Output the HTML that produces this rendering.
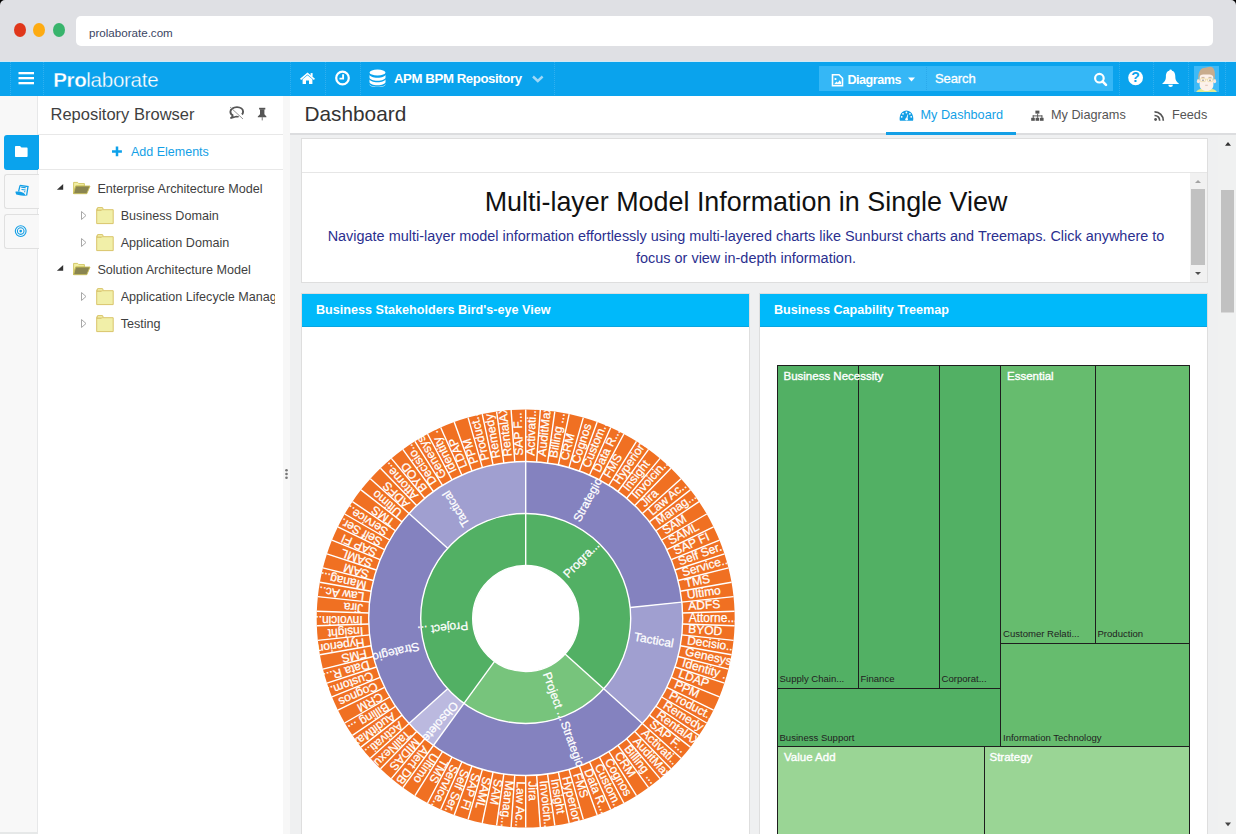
<!DOCTYPE html>
<html><head><meta charset="utf-8">
<style>
*{margin:0;padding:0;box-sizing:border-box}
html,body{width:1236px;height:834px;overflow:hidden;background:#000;font-family:"Liberation Sans",sans-serif}
.a{position:absolute}
#chrome{left:0;top:0;width:1236px;height:62px;background:#dfe0e4;border-radius:5px 5px 0 0}
.dot{width:12px;height:14px;border-radius:50%;top:23px}
#url{left:76px;top:16px;width:1137px;height:30px;background:#fff;border-radius:5px}
#urltxt{left:89px;top:25.5px;font-size:11.6px;color:#3b4563}
#nav{left:0;top:61px;width:1236px;height:35px;background:#0aa3ed;border-top:1px solid #cfe8f6}
.sep{top:62px;width:1px;height:33px;background:#1696d6;opacity:.5}
#page{left:0;top:96px;width:1236px;height:738px;background:#fff}
#rail{left:0;top:96px;width:38px;height:738px;background:#f8f8f8;border-right:1px solid #e7e8e9;border-bottom:2px solid #e6e8e8}
#lpanel{left:38px;top:96px;width:245px;height:738px;background:#fff}
#split{left:283px;top:96px;width:8px;height:738px;background:#f7f7f7;border-right:1px solid #dcdcdc}
#mainhdr{left:290px;top:96px;width:946px;height:37px;background:#fff}
#content{left:290px;top:133px;width:928px;height:701px;background:#eff0f1;border-top:2px solid #dcdddf}
#vscroll{left:1218px;top:133px;width:18px;height:701px;background:#f0f1f1;border-top:2px solid #dcdddf}
.card{background:#fff;border:1px solid #dedede}
.hdr{background:#00b9fa;border-bottom:1px solid #0aa5e0;color:#fff;font-weight:bold;font-size:12.6px;height:33px;line-height:33px;padding-left:14px}
.tree{font-size:12.6px;color:#3f3f3f}
.tab{font-size:12.7px}
.tm{position:absolute;border:1px solid #1c1c1c}
.tml{position:absolute;font-size:10px;color:#222}
.tmh{position:absolute;font-size:12px;font-weight:bold;color:#fff}
</style></head><body>
<div id="chrome" class="a"></div>
<div class="a dot" style="left:14px;background:#e0371b"></div>
<div class="a dot" style="left:33px;background:#fdab12"></div>
<div class="a dot" style="left:53px;background:#38b46c"></div>
<div id="url" class="a"></div>
<div id="urltxt" class="a">prolaborate.com</div>

<div id="nav" class="a"></div>
<div id="page" class="a"></div>
<div id="rail" class="a"></div>
<div id="lpanel" class="a"></div>
<div id="split" class="a"></div>
<div id="mainhdr" class="a"></div>
<div id="content" class="a"></div>
<div id="vscroll" class="a"></div>

<!-- nav content -->
<div class="a" style="left:53.3px;top:67.9px;font-size:20.5px;color:#fff;letter-spacing:-0.25px"><b style="font-weight:bold;letter-spacing:-0.4px;-webkit-text-stroke:0.3px #0aa3ed">Pro</b><span style="-webkit-text-stroke:0.3px #0aa3ed">laborate</span></div>
<svg class="a" style="left:0;top:61px" width="1236" height="35">
<g stroke="#3fb6f2" stroke-width="1" stroke-dasharray="1,1" opacity=".7">
<line x1="10.5" y1="1" x2="10.5" y2="34"/><line x1="43.5" y1="1" x2="43.5" y2="34"/>
<line x1="290.5" y1="1" x2="290.5" y2="34"/><line x1="325.5" y1="1" x2="325.5" y2="34"/><line x1="360.5" y1="1" x2="360.5" y2="34"/><line x1="554.5" y1="1" x2="554.5" y2="34"/>
<line x1="1119.5" y1="1" x2="1119.5" y2="34"/><line x1="1153.5" y1="1" x2="1153.5" y2="34"/><line x1="1188.5" y1="1" x2="1188.5" y2="34"/><line x1="1225.5" y1="1" x2="1225.5" y2="34"/>
</g>
<rect x="819" y="5" width="294" height="25" fill="#35b7f6"/>
<line x1="926.5" y1="6" x2="926.5" y2="30" stroke="#2aa9ec" stroke-dasharray="1,1"/>
<g fill="#fff">
<rect x="18.5" y="11" width="15.5" height="2.3"/><rect x="18.5" y="16" width="15.5" height="2.3"/><rect x="18.5" y="21" width="15.5" height="2.3"/>
</g>
<!-- home -->
<g transform="translate(300,11.5)" fill="#fff">
<path d="M0,6.2 L7.5,0 L15,6.2 L13.9,7.4 L7.5,2.1 L1.1,7.4 Z"/>
<path d="M2.6,6.8 L7.5,2.8 L12.4,6.8 V11.5 H9 V8 H6 V11.5 H2.6 Z"/>
<rect x="10.6" y="0.6" width="2" height="3.6"/>
</g>
<!-- clock -->
<g transform="translate(342.5,17)" fill="none" stroke="#fff">
<circle r="6.3" stroke-width="2.2"/><path d="M0.6,-3.8 V0.6 H-3" stroke-width="1.9"/>
</g>
<!-- database -->
<g transform="translate(369.5,8.5)" fill="#fff">
<ellipse cx="8" cy="3" rx="8" ry="3"/>
<path d="M0,5 C0,6.8 3.6,8.2 8,8.2 C12.4,8.2 16,6.8 16,5 V8 C16,9.8 12.4,11.2 8,11.2 C3.6,11.2 0,9.8 0,8 Z"/>
<path d="M0,9.6 C0,11.4 3.6,12.8 8,12.8 C12.4,12.8 16,11.4 16,9.6 V12.6 C16,14.4 12.4,15.8 8,15.8 C3.6,15.8 0,14.4 0,12.6 Z"/>
<path d="M0,14.2 C0,16 3.6,17.2 8,17.2 C12.4,17.2 16,16 16,14.2 V14.9 C16,16.5 12.4,17.6 8,17.6 C3.6,17.6 0,16.5 0,14.9 Z"/>
</g>
<path d="M533,15.5 L537.8,20 L542.6,15.5" fill="none" stroke="#9fd8f7" stroke-width="2.4"/>
<!-- diagrams file icon -->
<g transform="translate(831.5,12.8)" fill="none" stroke="#fff" stroke-width="1.6">
<path d="M1,1 H7.5 L11,4.5 V12 H1 Z"/>
<circle cx="4" cy="5.2" r="1.1" fill="#fff" stroke="none"/>
<path d="M2.5,10.5 L5,7.8 L6.3,9 L8.2,6.5 L9.6,8.5 V10.5 Z" fill="#fff" stroke="none"/>
</g>
<path d="M908,16.5 H915 L911.5,20.5 Z" fill="#fff"/>
<!-- search -->
<g fill="none" stroke="#fff"><circle cx="1099.4" cy="17.2" r="4.3" stroke-width="2.2"/><path d="M1102.5,20.3 L1106,23.8" stroke-width="2.6" stroke-linecap="round"/></g>
<!-- question -->
<circle cx="1135.6" cy="16.8" r="7.4" fill="#fff"/>
<text x="1135.6" y="21.3" text-anchor="middle" font-family="Liberation Sans" font-weight="bold" font-size="14" fill="#0aa3ed">?</text>
<!-- bell -->
<g transform="translate(1162.5,8.4)" fill="#fff">
<path d="M8.1,1.2 C11.6,1.2 12.8,4 12.8,7 C12.8,11 14.2,12.4 16.2,13.8 V14.6 H0 V13.8 C2,12.4 3.4,11 3.4,7 C3.4,4 4.6,1.2 8.1,1.2 Z"/>
<circle cx="8.1" cy="1.2" r="1.2"/>
<path d="M5.8,15.3 A2.3,2.3 0 0 0 10.4,15.3 Z"/>
</g>
<!-- avatar -->
<g transform="translate(1194,5)">
<rect x="0" y="0" width="25" height="26" fill="#3fbaf7"/>
<ellipse cx="4.4" cy="15.2" rx="1.5" ry="2.1" fill="#fbe6dc"/><ellipse cx="20.6" cy="15.2" rx="1.5" ry="2.1" fill="#fbe6dc"/>
<path d="M2,26 C4,23 8,22 12.5,22 C17,22 21,23 23,26 Z" fill="#e2ea8f"/>
<path d="M5.6,11 C5.6,6 8,5 12.5,5 C17,5 19.4,6 19.4,11 V19 C19.4,22.5 16.5,25 12.5,25 C8.5,25 5.6,22.5 5.6,19 Z" fill="#fcf1ea"/>
<path d="M4.5,14 C3.6,6 6.5,2 11,1.8 C13,1.6 15,0.2 17.5,1 C20.5,2 21.5,6 20.5,14 L19.4,10.5 C18,8.5 15,8.5 12.5,8.6 C9,8.6 7,8.4 5.6,10.5 Z" fill="#c8ac8d"/>
<g fill="none" stroke="#e3cf7c" stroke-width=".5"><rect x="6.3" y="12.6" width="5.2" height="3" rx="1"/><rect x="13.5" y="12.6" width="5.2" height="3" rx="1"/><path d="M4.8,13 H6.3 M11.5,13.2 H13.5 M18.7,13 H20.2"/></g><circle cx="9" cy="14.2" r=".8" fill="#888"/><circle cx="16" cy="14.2" r=".8" fill="#888"/>
<path d="M7.5,11.4 H10.5 M14.5,11.4 H17.5" stroke="#b79a80" stroke-width=".7"/>
<path d="M11.2,19.3 H13.8" stroke="#d8b7a8" stroke-width=".8"/>
</g>
</svg>
<div class="a" style="left:394px;top:70.5px;font-size:13.2px;font-weight:bold;color:#fff;letter-spacing:-0.4px">APM BPM Repository</div>
<div class="a" style="left:847.5px;top:73px;font-size:12.6px;font-weight:bold;color:#fff;letter-spacing:-0.5px">Diagrams</div>
<div class="a" style="left:935px;top:71px;font-size:13px;color:#fff;-webkit-text-stroke:0.3px #fff;letter-spacing:-0.1px">Search</div>

<!-- left panel -->
<div class="a" style="left:3.5px;top:135px;width:35px;height:35px;background:#0aa3ed;border-radius:3px 0 0 3px"></div>
<div class="a" style="left:3.5px;top:174px;width:35px;height:35px;background:#f8f8f8;border:1px solid #e0e0e0;border-right:none;border-radius:3px 0 0 3px"></div>
<div class="a" style="left:3.5px;top:213.5px;width:35px;height:35px;background:#f8f8f8;border:1px solid #e0e0e0;border-right:none;border-radius:3px 0 0 3px"></div>
<svg class="a" style="left:0;top:96px" width="290" height="240">
<!-- rail folder -->
<path d="M15,51 C15,50.4 15.4,50 16,50 H20 L21.5,51.6 H26.6 C27.2,51.6 27.6,52 27.6,52.6 V60 C27.6,60.6 27.2,61 26.6,61 H16 C15.4,61 15,60.6 15,60 Z" fill="#fff"/>
<!-- rail diagram icon -->
<g transform="translate(15,88.5)" fill="none" stroke="#139fe6" stroke-width="1.3">
<path d="M5.1,0.8 L13,2 L11.6,11 M5.1,0.8 L3.6,6.8"/>
<path d="M6.2,2.6 L10.8,3.2 M6.5,5 L10.6,5.5 M9,7.2 L10.3,7.3" stroke-width="1.1"/>
<path d="M0.3,7.2 C3,6.8 6,7.3 8.6,8.5 C9.4,9 9.9,10 11.4,11.3 C8,11.3 4,10.8 1.2,9.9 Z" fill="#139fe6" stroke="none"/>
</g>
<!-- rail target -->
<g transform="translate(20.7,135.1)" fill="none" stroke="#139fe6">
<circle r="5.4" stroke-width="1.1"/><circle r="3.3" stroke-width="1.1"/><circle r="1.3" fill="#139fe6" stroke="none"/>
</g>
<!-- comment slash -->
<g transform="translate(229.5,10.5)" fill="none" stroke="#555">
<path d="M3.6,9.2 C1.8,8.2 0.9,6.8 0.9,5.3 C0.9,2.6 3.9,0.6 7.5,0.6 C11.1,0.6 13.6,2.6 13.6,5.3 C13.6,6.3 13.2,7.2 12.5,8" stroke-width="1.9"/>
<path d="M3.8,9 L1,11.8 L6.8,10.1 C7.6,10.2 8.4,10.2 9.2,10.1" stroke-width="1.5"/>
<path d="M0.6,0.6 L13.5,12.5" stroke="#888" stroke-width="0.9"/>
</g>
<!-- pin -->
<g transform="translate(257.8,11.8)" fill="#555">
<rect x="1.3" y="0" width="6.2" height="1.7"/>
<path d="M2.2,1.4 H6.6 V6.5 L8.6,8.7 V9.4 H0 V8.7 L2.2,6.5 Z"/>
<rect x="3.9" y="9" width="1.1" height="3.6" fill="#888"/>
</g>
<!-- plus -->
<path d="M117,50.5 V60.3 M112,55.4 H121.9" stroke="#0ea1ea" stroke-width="2.5"/>
<!-- tree -->
<g fill="#333"><path d="M63.2,87.9 V93.8 H56.9 Z"/><path d="M63.2,168.9 V174.8 H56.9 Z"/></g>
<g fill="none" stroke="#a8a8a8" stroke-width="1"><path d="M81.5,115.5 L86,119.5 L81.5,123.5 Z"/><path d="M81.5,142.5 L86,146.5 L81.5,150.5 Z"/><path d="M81.5,196.5 L86,200.5 L81.5,204.5 Z"/><path d="M81.5,223.5 L86,227.5 L81.5,231.5 Z"/></g>
<g id="ofold"><path d="M73.6,86.4 H77.6 L78.8,87.6 H84.4 V90 H75.8 L73.6,97.7 Z" fill="#f2eea4" stroke="#cfc45c" stroke-width="0.9"/>
<path d="M75.6,90 H90 L86.8,97.7 H73.6 Z" fill="#8a8550" stroke="#c9c05a" stroke-width="0.9"/></g>
<use href="#ofold" y="81"/>
<g id="cfold" transform="translate(0,1.3)"><path d="M97,113 H101.4 L102.6,111.5 H96.9 Z M96.7,112.4 H113.2 V126.3 H96.7 Z" fill="#f1efa8" stroke="#d9c46a" stroke-width="1"/>
<path d="M97.3,112.2 V110.8 C97.3,110.5 97.5,110.3 97.8,110.3 H102.4 C102.7,110.3 102.9,110.5 102.9,110.8 V112.2" fill="#f1efa8" stroke="#d9c46a" stroke-width="1"/></g>
<use href="#cfold" y="27"/><use href="#cfold" y="81"/><use href="#cfold" y="108"/>
</svg>
<div class="a" style="left:50.5px;top:104.5px;font-size:16.5px;color:#3f3f3f">Repository Browser</div>
<div class="a" style="left:38px;top:134px;width:245px;height:1px;background:#e8e8e8"></div>
<div class="a" style="left:38px;top:169px;width:245px;height:1px;background:#e8e8e8"></div>
<div class="a" style="left:131px;top:144.5px;font-size:12.5px;color:#139fe6">Add Elements</div>
<div class="a tree" style="left:97.4px;top:181.5px">Enterprise Architecture Model</div>
<div class="a tree" style="left:120.7px;top:208.5px">Business Domain</div>
<div class="a tree" style="left:120.7px;top:235.5px">Application Domain</div>
<div class="a tree" style="left:97.4px;top:262.5px">Solution Architecture Model</div>
<div class="a tree" style="left:120.7px;top:289.5px;width:154px;overflow:hidden;white-space:nowrap">Application Lifecycle Management</div>
<div class="a tree" style="left:120.7px;top:316.5px">Testing</div>

<!-- main header -->
<div class="a" style="left:304.5px;top:102px;font-size:20.8px;color:#333">Dashboard</div>
<svg class="a" style="left:880px;top:100px" width="356" height="40">
<g transform="translate(19.7,10.5)"><path d="M0.2,10.2 C-0.6,8.8 -0.2,0 6.75,0 C13.7,0 14.1,8.8 13.3,10.2 Z" fill="#139fe6"/>
<g fill="#fff"><circle cx="6.75" cy="2" r="0.9"/><circle cx="3.3" cy="3.3" r="0.9"/><circle cx="10.2" cy="3.3" r="0.9"/><circle cx="2" cy="6.3" r="0.9"/><circle cx="11.5" cy="6.3" r="0.9"/><path d="M6.1,8.8 L8,3.8 L8.5,4 L7.6,8.9 Z"/><circle cx="6.9" cy="8.7" r="1.3"/></g></g>
<g transform="translate(1031.2,-880)"></g>
<g transform="translate(151.2,10.6)" fill="#555"><rect x="4.2" y="0" width="4" height="3"/><rect x="6" y="3" width="0.9" height="2.3"/><rect x="1.5" y="4.8" width="9.6" height="1"/><rect x="1.5" y="4.8" width="1" height="2.6"/><rect x="10.2" y="4.8" width="1" height="2.6"/><rect x="0" y="7.2" width="3.6" height="3"/><rect x="4.4" y="7.2" width="3.6" height="3"/><rect x="8.8" y="7.2" width="3.6" height="3"/><rect x="6" y="5" width="0.9" height="2.3"/></g>
<g transform="translate(274.2,11)" fill="none" stroke="#555"><circle cx="1.4" cy="8.5" r="1.4" fill="#555" stroke="none"/><path d="M0.3,4.5 A5,5 0 0 1 5.5,9.7" stroke-width="1.7"/><path d="M0.3,0.9 A8.6,8.6 0 0 1 9.1,9.7" stroke-width="1.7"/></g>
</svg>
<div class="a tab" style="left:920.5px;top:107.5px;color:#139fe6">My Dashboard</div>
<div class="a tab" style="left:1051px;top:107.5px;color:#555">My Diagrams</div>
<div class="a tab" style="left:1172px;top:107.5px;color:#555">Feeds</div>
<div class="a" style="left:886px;top:132px;width:130px;height:3px;background:#139fe6"></div>

<!-- top card -->
<div class="a card" style="left:301px;top:138px;width:907px;height:145px"></div>
<div class="a" style="left:302px;top:172px;width:905px;height:1px;background:#e6e6e6"></div>
<div class="a" style="left:302px;top:186.5px;width:888px;text-align:center;font-size:26.9px;color:#111">Multi-layer Model Information in Single View</div>
<div class="a" style="left:316px;top:224.7px;width:860px;text-align:center;font-size:14.45px;line-height:22px;color:#2b2f8f">Navigate multi-layer model information effortlessly using multi-layered charts like Sunburst charts and Treemaps. Click anywhere to focus or view in-depth information.</div>
<div class="a" style="left:1190px;top:173px;width:17px;height:109px;background:#f1f1f1"></div>
<div class="a" style="left:1191px;top:189px;width:14px;height:76px;background:#c1c1c1"></div>
<svg class="a" style="left:1180px;top:134px" width="56" height="700">
<path d="M15,49 L18,46 L21,49 Z" fill="#a3a3a3"/>
<path d="M15,138 L18,141 L21,138 Z" fill="#505050"/>
<path d="M45,11.8 L48,8 L51,11.8 Z" fill="#333"/>
<rect x="41" y="56" width="13" height="122.5" fill="#c1c1c1"/>
<path d="M45,688.5 L48,692.3 L51,688.5 Z" fill="#444"/>
</svg>

<!-- chart cards -->
<div class="a card" style="left:301px;top:293px;width:449px;height:560px"></div>
<div class="a hdr" style="left:302px;top:294px;width:447px">Business Stakeholders Bird's-eye View</div>
<div class="a card" style="left:759px;top:293px;width:449px;height:560px"></div>
<div class="a hdr" style="left:760px;top:294px;width:447px">Business Capability Treemap</div>

<!-- treemap -->
<div class="a" style="left:777px;top:365px;width:413px;height:480px;background:#52b064;border:1px solid #1c1c1c"></div>
<svg class="a" style="left:0;top:0" width="1236" height="834"><rect x="777.5" y="365.5" width="223.0" height="381.0" fill="#52b064"/><rect x="1000.5" y="365.5" width="189.0" height="381.0" fill="#66bc6e"/><rect x="777.5" y="746.5" width="412.0" height="97.5" fill="#9ad595"/><g stroke="#1e1e1e" stroke-width="1"><line x1="858.5" y1="365.5" x2="858.5" y2="688.5"/><line x1="939.5" y1="365.5" x2="939.5" y2="688.5"/><line x1="1000.5" y1="365.5" x2="1000.5" y2="746.5"/><line x1="1095.5" y1="365.5" x2="1095.5" y2="643.5"/><line x1="984.5" y1="746.5" x2="984.5" y2="839"/><line x1="777.5" y1="688.5" x2="1000.5" y2="688.5"/><line x1="1000.5" y1="643.5" x2="1189.5" y2="643.5"/><line x1="777.5" y1="746.5" x2="1189.5" y2="746.5"/><line x1="777.5" y1="365.5" x2="1189.5" y2="365.5"/><line x1="777.5" y1="365.5" x2="777.5" y2="839"/><line x1="1189.5" y1="365.5" x2="1189.5" y2="839"/></g><g font-family="Liberation Sans" font-size="9.55" fill="#222"><text x="779.5" y="682">Supply Chain...</text><text x="860.5" y="682">Finance</text><text x="941.5" y="682">Corporat...</text><text x="779.5" y="741">Business Support</text><text x="1003" y="637">Customer Relati...</text><text x="1097.5" y="637">Production</text><text x="1003" y="741">Information Technology</text></g><g font-family="Liberation Sans" font-size="11.5" fill="#fff" stroke="#fff" stroke-width="0.35"><text x="783.5" y="380">Business Necessity</text><text x="1007" y="380">Essential</text><text x="784" y="761">Value Add</text><text x="989.5" y="761">Strategy</text></g></svg>
<svg class="a" style="left:284px;top:466px" width="6" height="16"><g fill="#777"><circle cx="2.5" cy="4.2" r="1.3"/><circle cx="2.5" cy="8" r="1.3"/><circle cx="2.5" cy="11.8" r="1.3"/></g></svg>

<svg width="1236" height="834" style="position:absolute;left:0;top:0">
<g><path d="M525.70,513.50A105,105 0 0 1 603.73,688.76L565.09,653.96A53,53 0 0 0 525.70,565.50Z" fill="#52b064"/><path d="M603.73,688.76A105,105 0 0 1 463.98,703.45L494.55,661.38A53,53 0 0 0 565.09,653.96Z" fill="#77c47c"/><path d="M463.98,703.45A105,105 0 0 1 525.70,513.50L525.70,565.50A53,53 0 0 0 494.55,661.38Z" fill="#52b064"/><path d="M525.70,461.50A157,157 0 0 1 681.84,602.09L630.12,607.52A105,105 0 0 0 525.70,513.50Z" fill="#8482bf"/><path d="M681.84,602.09A157,157 0 0 1 642.37,723.55L603.73,688.76A105,105 0 0 0 630.12,607.52Z" fill="#a09fd0"/><path d="M642.37,723.55A157,157 0 0 1 433.42,745.52L463.98,703.45A105,105 0 0 0 603.73,688.76Z" fill="#8482bf"/><path d="M433.42,745.52A157,157 0 0 1 409.03,723.55L447.67,688.76A105,105 0 0 0 463.98,703.45Z" fill="#bbb9df"/><path d="M409.03,723.55A157,157 0 0 1 409.03,513.45L447.67,548.24A105,105 0 0 0 447.67,688.76Z" fill="#8482bf"/><path d="M409.03,513.45A157,157 0 0 1 525.70,461.50L525.70,513.50A105,105 0 0 0 447.67,548.24Z" fill="#a09fd0"/><path d="M525.70,409.50A209,209 0 0 1 540.28,410.01L536.65,461.88A157,157 0 0 0 525.70,461.50Z" fill="#f07022"/><path d="M540.28,410.01A209,209 0 0 1 554.79,411.53L547.55,463.03A157,157 0 0 0 536.65,461.88Z" fill="#f07022"/><path d="M554.79,411.53A209,209 0 0 1 569.15,414.07L558.34,464.93A157,157 0 0 0 547.55,463.03Z" fill="#f07022"/><path d="M569.15,414.07A209,209 0 0 1 583.31,417.60L568.98,467.58A157,157 0 0 0 558.34,464.93Z" fill="#f07022"/><path d="M583.31,417.60A209,209 0 0 1 597.18,422.10L579.40,470.97A157,157 0 0 0 568.98,467.58Z" fill="#f07022"/><path d="M597.18,422.10A209,209 0 0 1 610.71,427.57L589.56,475.07A157,157 0 0 0 579.40,470.97Z" fill="#f07022"/><path d="M610.71,427.57A209,209 0 0 1 623.82,433.96L599.41,479.88A157,157 0 0 0 589.56,475.07Z" fill="#f07022"/><path d="M623.82,433.96A209,209 0 0 1 636.45,441.26L608.90,485.36A157,157 0 0 0 599.41,479.88Z" fill="#f07022"/><path d="M636.45,441.26A209,209 0 0 1 648.55,449.42L617.98,491.48A157,157 0 0 0 608.90,485.36Z" fill="#f07022"/><path d="M648.55,449.42A209,209 0 0 1 660.04,458.40L626.62,498.23A157,157 0 0 0 617.98,491.48Z" fill="#f07022"/><path d="M660.04,458.40A209,209 0 0 1 670.88,468.16L634.76,505.56A157,157 0 0 0 626.62,498.23Z" fill="#f07022"/><path d="M670.88,468.16A209,209 0 0 1 681.02,478.65L642.37,513.45A157,157 0 0 0 634.76,505.56Z" fill="#f07022"/><path d="M681.02,478.65A209,209 0 0 1 690.39,489.83L649.42,521.84A157,157 0 0 0 642.37,513.45Z" fill="#f07022"/><path d="M690.39,489.83A209,209 0 0 1 698.97,501.63L655.86,530.71A157,157 0 0 0 649.42,521.84Z" fill="#f07022"/><path d="M698.97,501.63A209,209 0 0 1 706.70,514.00L661.67,540.00A157,157 0 0 0 655.86,530.71Z" fill="#f07022"/><path d="M706.70,514.00A209,209 0 0 1 713.55,526.88L666.81,549.68A157,157 0 0 0 661.67,540.00Z" fill="#f07022"/><path d="M713.55,526.88A209,209 0 0 1 719.48,540.21L671.27,559.69A157,157 0 0 0 666.81,549.68Z" fill="#f07022"/><path d="M719.48,540.21A209,209 0 0 1 724.47,553.92L675.02,569.98A157,157 0 0 0 671.27,559.69Z" fill="#f07022"/><path d="M724.47,553.92A209,209 0 0 1 728.49,567.94L678.04,580.52A157,157 0 0 0 675.02,569.98Z" fill="#f07022"/><path d="M728.49,567.94A209,209 0 0 1 731.52,582.21L680.31,591.24A157,157 0 0 0 678.04,580.52Z" fill="#f07022"/><path d="M731.52,582.21A209,209 0 0 1 733.56,596.65L681.84,602.09A157,157 0 0 0 680.31,591.24Z" fill="#f07022"/><path d="M733.56,596.65A209,209 0 0 1 734.57,611.21L682.60,613.02A157,157 0 0 0 681.84,602.09Z" fill="#f07022"/><path d="M734.57,611.21A209,209 0 0 1 734.57,625.79L682.60,623.98A157,157 0 0 0 682.60,613.02Z" fill="#f07022"/><path d="M734.57,625.79A209,209 0 0 1 733.56,640.35L681.84,634.91A157,157 0 0 0 682.60,623.98Z" fill="#f07022"/><path d="M733.56,640.35A209,209 0 0 1 731.52,654.79L680.31,645.76A157,157 0 0 0 681.84,634.91Z" fill="#f07022"/><path d="M731.52,654.79A209,209 0 0 1 728.49,669.06L678.04,656.48A157,157 0 0 0 680.31,645.76Z" fill="#f07022"/><path d="M728.49,669.06A209,209 0 0 1 724.47,683.08L675.02,667.02A157,157 0 0 0 678.04,656.48Z" fill="#f07022"/><path d="M724.47,683.08A209,209 0 0 1 719.48,696.79L671.27,677.31A157,157 0 0 0 675.02,667.02Z" fill="#f07022"/><path d="M719.48,696.79A209,209 0 0 1 713.55,710.12L666.81,687.32A157,157 0 0 0 671.27,677.31Z" fill="#f07022"/><path d="M713.55,710.12A209,209 0 0 1 706.70,723.00L661.67,697.00A157,157 0 0 0 666.81,687.32Z" fill="#f07022"/><path d="M706.70,723.00A209,209 0 0 1 698.97,735.37L655.86,706.29A157,157 0 0 0 661.67,697.00Z" fill="#f07022"/><path d="M698.97,735.37A209,209 0 0 1 690.39,747.17L649.42,715.16A157,157 0 0 0 655.86,706.29Z" fill="#f07022"/><path d="M690.39,747.17A209,209 0 0 1 681.02,758.35L642.37,723.55A157,157 0 0 0 649.42,715.16Z" fill="#f07022"/><path d="M681.02,758.35A209,209 0 0 1 670.88,768.84L634.76,731.44A157,157 0 0 0 642.37,723.55Z" fill="#f07022"/><path d="M670.88,768.84A209,209 0 0 1 660.04,778.60L626.62,738.77A157,157 0 0 0 634.76,731.44Z" fill="#f07022"/><path d="M660.04,778.60A209,209 0 0 1 648.55,787.58L617.98,745.52A157,157 0 0 0 626.62,738.77Z" fill="#f07022"/><path d="M648.55,787.58A209,209 0 0 1 636.45,795.74L608.90,751.64A157,157 0 0 0 617.98,745.52Z" fill="#f07022"/><path d="M636.45,795.74A209,209 0 0 1 623.82,803.04L599.41,757.12A157,157 0 0 0 608.90,751.64Z" fill="#f07022"/><path d="M623.82,803.04A209,209 0 0 1 610.71,809.43L589.56,761.93A157,157 0 0 0 599.41,757.12Z" fill="#f07022"/><path d="M610.71,809.43A209,209 0 0 1 597.18,814.90L579.40,766.03A157,157 0 0 0 589.56,761.93Z" fill="#f07022"/><path d="M597.18,814.90A209,209 0 0 1 583.31,819.40L568.98,769.42A157,157 0 0 0 579.40,766.03Z" fill="#f07022"/><path d="M583.31,819.40A209,209 0 0 1 569.15,822.93L558.34,772.07A157,157 0 0 0 568.98,769.42Z" fill="#f07022"/><path d="M569.15,822.93A209,209 0 0 1 554.79,825.47L547.55,773.97A157,157 0 0 0 558.34,772.07Z" fill="#f07022"/><path d="M554.79,825.47A209,209 0 0 1 540.28,826.99L536.65,775.12A157,157 0 0 0 547.55,773.97Z" fill="#f07022"/><path d="M540.28,826.99A209,209 0 0 1 525.70,827.50L525.70,775.50A157,157 0 0 0 536.65,775.12Z" fill="#f07022"/><path d="M525.70,827.50A209,209 0 0 1 511.12,826.99L514.75,775.12A157,157 0 0 0 525.70,775.50Z" fill="#f07022"/><path d="M511.12,826.99A209,209 0 0 1 496.61,825.47L503.85,773.97A157,157 0 0 0 514.75,775.12Z" fill="#f07022"/><path d="M496.61,825.47A209,209 0 0 1 482.25,822.93L493.06,772.07A157,157 0 0 0 503.85,773.97Z" fill="#f07022"/><path d="M482.25,822.93A209,209 0 0 1 468.09,819.40L482.42,769.42A157,157 0 0 0 493.06,772.07Z" fill="#f07022"/><path d="M468.09,819.40A209,209 0 0 1 454.22,814.90L472.00,766.03A157,157 0 0 0 482.42,769.42Z" fill="#f07022"/><path d="M454.22,814.90A209,209 0 0 1 440.69,809.43L461.84,761.93A157,157 0 0 0 472.00,766.03Z" fill="#f07022"/><path d="M440.69,809.43A209,209 0 0 1 427.58,803.04L451.99,757.12A157,157 0 0 0 461.84,761.93Z" fill="#f07022"/><path d="M427.58,803.04A209,209 0 0 1 414.95,795.74L442.50,751.64A157,157 0 0 0 451.99,757.12Z" fill="#f07022"/><path d="M414.95,795.74A209,209 0 0 1 402.85,787.58L433.42,745.52A157,157 0 0 0 442.50,751.64Z" fill="#f07022"/><path d="M402.85,787.58A209,209 0 0 1 391.36,778.60L424.78,738.77A157,157 0 0 0 433.42,745.52Z" fill="#f07022"/><path d="M391.36,778.60A209,209 0 0 1 380.52,768.84L416.64,731.44A157,157 0 0 0 424.78,738.77Z" fill="#f07022"/><path d="M380.52,768.84A209,209 0 0 1 370.38,758.35L409.03,723.55A157,157 0 0 0 416.64,731.44Z" fill="#f07022"/><path d="M370.38,758.35A209,209 0 0 1 361.01,747.17L401.98,715.16A157,157 0 0 0 409.03,723.55Z" fill="#f07022"/><path d="M361.01,747.17A209,209 0 0 1 352.43,735.37L395.54,706.29A157,157 0 0 0 401.98,715.16Z" fill="#f07022"/><path d="M352.43,735.37A209,209 0 0 1 344.70,723.00L389.73,697.00A157,157 0 0 0 395.54,706.29Z" fill="#f07022"/><path d="M344.70,723.00A209,209 0 0 1 337.85,710.12L384.59,687.32A157,157 0 0 0 389.73,697.00Z" fill="#f07022"/><path d="M337.85,710.12A209,209 0 0 1 331.92,696.79L380.13,677.31A157,157 0 0 0 384.59,687.32Z" fill="#f07022"/><path d="M331.92,696.79A209,209 0 0 1 326.93,683.08L376.38,667.02A157,157 0 0 0 380.13,677.31Z" fill="#f07022"/><path d="M326.93,683.08A209,209 0 0 1 322.91,669.06L373.36,656.48A157,157 0 0 0 376.38,667.02Z" fill="#f07022"/><path d="M322.91,669.06A209,209 0 0 1 319.88,654.79L371.09,645.76A157,157 0 0 0 373.36,656.48Z" fill="#f07022"/><path d="M319.88,654.79A209,209 0 0 1 317.84,640.35L369.56,634.91A157,157 0 0 0 371.09,645.76Z" fill="#f07022"/><path d="M317.84,640.35A209,209 0 0 1 316.83,625.79L368.80,623.98A157,157 0 0 0 369.56,634.91Z" fill="#f07022"/><path d="M316.83,625.79A209,209 0 0 1 316.83,611.21L368.80,613.02A157,157 0 0 0 368.80,623.98Z" fill="#f07022"/><path d="M316.83,611.21A209,209 0 0 1 317.84,596.65L369.56,602.09A157,157 0 0 0 368.80,613.02Z" fill="#f07022"/><path d="M317.84,596.65A209,209 0 0 1 319.88,582.21L371.09,591.24A157,157 0 0 0 369.56,602.09Z" fill="#f07022"/><path d="M319.88,582.21A209,209 0 0 1 322.91,567.94L373.36,580.52A157,157 0 0 0 371.09,591.24Z" fill="#f07022"/><path d="M322.91,567.94A209,209 0 0 1 326.93,553.92L376.38,569.98A157,157 0 0 0 373.36,580.52Z" fill="#f07022"/><path d="M326.93,553.92A209,209 0 0 1 331.92,540.21L380.13,559.69A157,157 0 0 0 376.38,569.98Z" fill="#f07022"/><path d="M331.92,540.21A209,209 0 0 1 337.85,526.88L384.59,549.68A157,157 0 0 0 380.13,559.69Z" fill="#f07022"/><path d="M337.85,526.88A209,209 0 0 1 344.70,514.00L389.73,540.00A157,157 0 0 0 384.59,549.68Z" fill="#f07022"/><path d="M344.70,514.00A209,209 0 0 1 352.43,501.63L395.54,530.71A157,157 0 0 0 389.73,540.00Z" fill="#f07022"/><path d="M352.43,501.63A209,209 0 0 1 361.01,489.83L401.98,521.84A157,157 0 0 0 395.54,530.71Z" fill="#f07022"/><path d="M361.01,489.83A209,209 0 0 1 370.38,478.65L409.03,513.45A157,157 0 0 0 401.98,521.84Z" fill="#f07022"/><path d="M370.38,478.65A209,209 0 0 1 380.52,468.16L416.64,505.56A157,157 0 0 0 409.03,513.45Z" fill="#f07022"/><path d="M380.52,468.16A209,209 0 0 1 391.36,458.40L424.78,498.23A157,157 0 0 0 416.64,505.56Z" fill="#f07022"/><path d="M391.36,458.40A209,209 0 0 1 402.85,449.42L433.42,491.48A157,157 0 0 0 424.78,498.23Z" fill="#f07022"/><path d="M402.85,449.42A209,209 0 0 1 414.95,441.26L442.50,485.36A157,157 0 0 0 433.42,491.48Z" fill="#f07022"/><path d="M414.95,441.26A209,209 0 0 1 427.58,433.96L451.99,479.88A157,157 0 0 0 442.50,485.36Z" fill="#f07022"/><path d="M427.58,433.96A209,209 0 0 1 440.69,427.57L461.84,475.07A157,157 0 0 0 451.99,479.88Z" fill="#f07022"/><path d="M440.69,427.57A209,209 0 0 1 454.22,422.10L472.00,470.97A157,157 0 0 0 461.84,475.07Z" fill="#f07022"/><path d="M454.22,422.10A209,209 0 0 1 468.09,417.60L482.42,467.58A157,157 0 0 0 472.00,470.97Z" fill="#f07022"/><path d="M468.09,417.60A209,209 0 0 1 482.25,414.07L493.06,464.93A157,157 0 0 0 482.42,467.58Z" fill="#f07022"/><path d="M482.25,414.07A209,209 0 0 1 496.61,411.53L503.85,463.03A157,157 0 0 0 493.06,464.93Z" fill="#f07022"/><path d="M496.61,411.53A209,209 0 0 1 511.12,410.01L514.75,461.88A157,157 0 0 0 503.85,463.03Z" fill="#f07022"/><path d="M511.12,410.01A209,209 0 0 1 525.70,409.50L525.70,461.50A157,157 0 0 0 514.75,461.88Z" fill="#f07022"/></g>
<g stroke="#fff" stroke-width="1.4" fill="none">
<circle cx="525.7" cy="618.5" r="105"/><circle cx="525.7" cy="618.5" r="157"/><circle cx="525.7" cy="618.5" r="53"/>
<line x1="525.70" y1="565.50" x2="525.70" y2="513.50"/><line x1="565.09" y1="653.96" x2="603.73" y2="688.76"/><line x1="494.55" y1="661.38" x2="463.98" y2="703.45"/><line x1="525.70" y1="513.50" x2="525.70" y2="461.50"/><line x1="630.12" y1="607.52" x2="681.84" y2="602.09"/><line x1="603.73" y1="688.76" x2="642.37" y2="723.55"/><line x1="463.98" y1="703.45" x2="433.42" y2="745.52"/><line x1="447.67" y1="688.76" x2="409.03" y2="723.55"/><line x1="447.67" y1="548.24" x2="409.03" y2="513.45"/><line x1="525.70" y1="461.50" x2="525.70" y2="409.50"/><line x1="536.65" y1="461.88" x2="540.28" y2="410.01"/><line x1="547.55" y1="463.03" x2="554.79" y2="411.53"/><line x1="558.34" y1="464.93" x2="569.15" y2="414.07"/><line x1="568.98" y1="467.58" x2="583.31" y2="417.60"/><line x1="579.40" y1="470.97" x2="597.18" y2="422.10"/><line x1="589.56" y1="475.07" x2="610.71" y2="427.57"/><line x1="599.41" y1="479.88" x2="623.82" y2="433.96"/><line x1="608.90" y1="485.36" x2="636.45" y2="441.26"/><line x1="617.98" y1="491.48" x2="648.55" y2="449.42"/><line x1="626.62" y1="498.23" x2="660.04" y2="458.40"/><line x1="634.76" y1="505.56" x2="670.88" y2="468.16"/><line x1="642.37" y1="513.45" x2="681.02" y2="478.65"/><line x1="649.42" y1="521.84" x2="690.39" y2="489.83"/><line x1="655.86" y1="530.71" x2="698.97" y2="501.63"/><line x1="661.67" y1="540.00" x2="706.70" y2="514.00"/><line x1="666.81" y1="549.68" x2="713.55" y2="526.88"/><line x1="671.27" y1="559.69" x2="719.48" y2="540.21"/><line x1="675.02" y1="569.98" x2="724.47" y2="553.92"/><line x1="678.04" y1="580.52" x2="728.49" y2="567.94"/><line x1="680.31" y1="591.24" x2="731.52" y2="582.21"/><line x1="681.84" y1="602.09" x2="733.56" y2="596.65"/><line x1="682.60" y1="613.02" x2="734.57" y2="611.21"/><line x1="682.60" y1="623.98" x2="734.57" y2="625.79"/><line x1="681.84" y1="634.91" x2="733.56" y2="640.35"/><line x1="680.31" y1="645.76" x2="731.52" y2="654.79"/><line x1="678.04" y1="656.48" x2="728.49" y2="669.06"/><line x1="675.02" y1="667.02" x2="724.47" y2="683.08"/><line x1="671.27" y1="677.31" x2="719.48" y2="696.79"/><line x1="666.81" y1="687.32" x2="713.55" y2="710.12"/><line x1="661.67" y1="697.00" x2="706.70" y2="723.00"/><line x1="655.86" y1="706.29" x2="698.97" y2="735.37"/><line x1="649.42" y1="715.16" x2="690.39" y2="747.17"/><line x1="642.37" y1="723.55" x2="681.02" y2="758.35"/><line x1="634.76" y1="731.44" x2="670.88" y2="768.84"/><line x1="626.62" y1="738.77" x2="660.04" y2="778.60"/><line x1="617.98" y1="745.52" x2="648.55" y2="787.58"/><line x1="608.90" y1="751.64" x2="636.45" y2="795.74"/><line x1="599.41" y1="757.12" x2="623.82" y2="803.04"/><line x1="589.56" y1="761.93" x2="610.71" y2="809.43"/><line x1="579.40" y1="766.03" x2="597.18" y2="814.90"/><line x1="568.98" y1="769.42" x2="583.31" y2="819.40"/><line x1="558.34" y1="772.07" x2="569.15" y2="822.93"/><line x1="547.55" y1="773.97" x2="554.79" y2="825.47"/><line x1="536.65" y1="775.12" x2="540.28" y2="826.99"/><line x1="525.70" y1="775.50" x2="525.70" y2="827.50"/><line x1="514.75" y1="775.12" x2="511.12" y2="826.99"/><line x1="503.85" y1="773.97" x2="496.61" y2="825.47"/><line x1="493.06" y1="772.07" x2="482.25" y2="822.93"/><line x1="482.42" y1="769.42" x2="468.09" y2="819.40"/><line x1="472.00" y1="766.03" x2="454.22" y2="814.90"/><line x1="461.84" y1="761.93" x2="440.69" y2="809.43"/><line x1="451.99" y1="757.12" x2="427.58" y2="803.04"/><line x1="442.50" y1="751.64" x2="414.95" y2="795.74"/><line x1="433.42" y1="745.52" x2="402.85" y2="787.58"/><line x1="424.78" y1="738.77" x2="391.36" y2="778.60"/><line x1="416.64" y1="731.44" x2="380.52" y2="768.84"/><line x1="409.03" y1="723.55" x2="370.38" y2="758.35"/><line x1="401.98" y1="715.16" x2="361.01" y2="747.17"/><line x1="395.54" y1="706.29" x2="352.43" y2="735.37"/><line x1="389.73" y1="697.00" x2="344.70" y2="723.00"/><line x1="384.59" y1="687.32" x2="337.85" y2="710.12"/><line x1="380.13" y1="677.31" x2="331.92" y2="696.79"/><line x1="376.38" y1="667.02" x2="326.93" y2="683.08"/><line x1="373.36" y1="656.48" x2="322.91" y2="669.06"/><line x1="371.09" y1="645.76" x2="319.88" y2="654.79"/><line x1="369.56" y1="634.91" x2="317.84" y2="640.35"/><line x1="368.80" y1="623.98" x2="316.83" y2="625.79"/><line x1="368.80" y1="613.02" x2="316.83" y2="611.21"/><line x1="369.56" y1="602.09" x2="317.84" y2="596.65"/><line x1="371.09" y1="591.24" x2="319.88" y2="582.21"/><line x1="373.36" y1="580.52" x2="322.91" y2="567.94"/><line x1="376.38" y1="569.98" x2="326.93" y2="553.92"/><line x1="380.13" y1="559.69" x2="331.92" y2="540.21"/><line x1="384.59" y1="549.68" x2="337.85" y2="526.88"/><line x1="389.73" y1="540.00" x2="344.70" y2="514.00"/><line x1="395.54" y1="530.71" x2="352.43" y2="501.63"/><line x1="401.98" y1="521.84" x2="361.01" y2="489.83"/><line x1="409.03" y1="513.45" x2="370.38" y2="478.65"/><line x1="416.64" y1="505.56" x2="380.52" y2="468.16"/><line x1="424.78" y1="498.23" x2="391.36" y2="458.40"/><line x1="433.42" y1="491.48" x2="402.85" y2="449.42"/><line x1="442.50" y1="485.36" x2="414.95" y2="441.26"/><line x1="451.99" y1="479.88" x2="427.58" y2="433.96"/><line x1="461.84" y1="475.07" x2="440.69" y2="427.57"/><line x1="472.00" y1="470.97" x2="454.22" y2="422.10"/><line x1="482.42" y1="467.58" x2="468.09" y2="417.60"/><line x1="493.06" y1="464.93" x2="482.25" y2="414.07"/><line x1="503.85" y1="463.03" x2="496.61" y2="411.53"/><line x1="514.75" y1="461.88" x2="511.12" y2="410.01"/></g>
<g fill="#fff" stroke="#fff" stroke-width="0.25" font-family="Liberation Sans" font-size="12"><text transform="translate(565.99,576.78) rotate(-46.00)" dy="0.25em">Progra...</text><text transform="translate(545.54,673.00) rotate(70.00)" dy="0.25em">Project ...</text><text transform="translate(468.02,624.56) rotate(174.00)" dy="0.25em">Project ...</text><text transform="translate(577.34,521.38) rotate(-62.00)" dy="0.25em">Strategic</text><text transform="translate(634.03,637.60) rotate(10.00)" dy="0.25em">Tactical</text><text transform="translate(563.32,721.87) rotate(70.00)" dy="0.25em">Strategic</text><text transform="translate(454.99,702.76) rotate(130.00)" dy="0.25em">Obsolete</text><text transform="translate(418.97,645.11) rotate(166.00)" dy="0.25em">Strategic</text><text transform="translate(467.41,525.21) rotate(238.00)" dy="0.25em">Tactical</text><text transform="translate(531.39,455.60) rotate(-88.00)" dy="0.25em">Activati...</text><text transform="translate(542.74,456.39) rotate(-84.00)" dy="0.25em">AuditMax</text><text transform="translate(554.00,457.98) rotate(-80.00)" dy="0.25em">Billing ...</text><text transform="translate(565.13,460.34) rotate(-76.00)" dy="0.25em">CRM</text><text transform="translate(576.07,463.48) rotate(-72.00)" dy="0.25em">Cognos</text><text transform="translate(586.76,467.37) rotate(-68.00)" dy="0.25em">Custom...</text><text transform="translate(597.15,472.00) rotate(-64.00)" dy="0.25em">Data R...</text><text transform="translate(607.20,477.34) rotate(-60.00)" dy="0.25em">FMS</text><text transform="translate(616.85,483.37) rotate(-56.00)" dy="0.25em">Hyperion</text><text transform="translate(626.05,490.05) rotate(-52.00)" dy="0.25em">Insight</text><text transform="translate(634.77,497.37) rotate(-48.00)" dy="0.25em">Invoicin...</text><text transform="translate(642.95,505.27) rotate(-44.00)" dy="0.25em">Jira</text><text transform="translate(650.57,513.73) rotate(-40.00)" dy="0.25em">Law Ac...</text><text transform="translate(657.57,522.69) rotate(-36.00)" dy="0.25em">Manag...</text><text transform="translate(663.93,532.12) rotate(-32.00)" dy="0.25em">SAM</text><text transform="translate(669.62,541.98) rotate(-28.00)" dy="0.25em">SAML</text><text transform="translate(674.61,552.20) rotate(-24.00)" dy="0.25em">SAP FI</text><text transform="translate(678.87,562.75) rotate(-20.00)" dy="0.25em">Self Ser...</text><text transform="translate(682.39,573.57) rotate(-16.00)" dy="0.25em">Service...</text><text transform="translate(685.14,584.61) rotate(-12.00)" dy="0.25em">TMS</text><text transform="translate(687.11,595.81) rotate(-8.00)" dy="0.25em">Ultimo</text><text transform="translate(688.30,607.13) rotate(-4.00)" dy="0.25em">ADFS</text><text transform="translate(688.70,618.50) rotate(0.00)" dy="0.25em">Attorne...</text><text transform="translate(688.30,629.87) rotate(4.00)" dy="0.25em">BYOD</text><text transform="translate(687.11,641.19) rotate(8.00)" dy="0.25em">Decisio...</text><text transform="translate(685.14,652.39) rotate(12.00)" dy="0.25em">Genesys</text><text transform="translate(682.39,663.43) rotate(16.00)" dy="0.25em">Identity ...</text><text transform="translate(678.87,674.25) rotate(20.00)" dy="0.25em">LDAP</text><text transform="translate(674.61,684.80) rotate(24.00)" dy="0.25em">PPM</text><text transform="translate(669.62,695.02) rotate(28.00)" dy="0.25em">Product...</text><text transform="translate(663.93,704.88) rotate(32.00)" dy="0.25em">Remedy</text><text transform="translate(657.57,714.31) rotate(36.00)" dy="0.25em">RentalAX</text><text transform="translate(650.57,723.27) rotate(40.00)" dy="0.25em">SAP F...</text><text transform="translate(642.95,731.73) rotate(44.00)" dy="0.25em">Activati...</text><text transform="translate(634.77,739.63) rotate(48.00)" dy="0.25em">AuditMax</text><text transform="translate(626.05,746.95) rotate(52.00)" dy="0.25em">Billing ...</text><text transform="translate(616.85,753.63) rotate(56.00)" dy="0.25em">CRM</text><text transform="translate(607.20,759.66) rotate(60.00)" dy="0.25em">Cognos</text><text transform="translate(597.15,765.00) rotate(64.00)" dy="0.25em">Custom...</text><text transform="translate(586.76,769.63) rotate(68.00)" dy="0.25em">Data R...</text><text transform="translate(576.07,773.52) rotate(72.00)" dy="0.25em">FMS</text><text transform="translate(565.13,776.66) rotate(76.00)" dy="0.25em">Hyperion</text><text transform="translate(554.00,779.02) rotate(80.00)" dy="0.25em">Insight</text><text transform="translate(542.74,780.61) rotate(84.00)" dy="0.25em">Invoicin...</text><text transform="translate(531.39,781.40) rotate(88.00)" dy="0.25em">Jira</text><text transform="translate(520.01,781.40) rotate(92.00)" dy="0.25em">Law Ac...</text><text transform="translate(508.66,780.61) rotate(96.00)" dy="0.25em">Manag...</text><text transform="translate(497.40,779.02) rotate(100.00)" dy="0.25em">SAM</text><text transform="translate(486.27,776.66) rotate(104.00)" dy="0.25em">SAML</text><text transform="translate(475.33,773.52) rotate(108.00)" dy="0.25em">SAP FI</text><text transform="translate(464.64,769.63) rotate(112.00)" dy="0.25em">Self Ser...</text><text transform="translate(454.25,765.00) rotate(116.00)" dy="0.25em">Service...</text><text transform="translate(444.20,759.66) rotate(120.00)" dy="0.25em">TMS</text><text transform="translate(434.55,753.63) rotate(124.00)" dy="0.25em">Ultimo</text><text transform="translate(425.35,746.95) rotate(128.00)" dy="0.25em">Alert DB</text><text transform="translate(416.63,739.63) rotate(132.00)" dy="0.25em">MIDAS</text><text transform="translate(408.45,731.73) rotate(136.00)" dy="0.25em">TailNexus</text><text transform="translate(400.83,723.27) rotate(140.00)" dy="0.25em">Activati...</text><text transform="translate(393.83,714.31) rotate(144.00)" dy="0.25em">AuditMax</text><text transform="translate(387.47,704.88) rotate(148.00)" dy="0.25em">Billing ...</text><text transform="translate(381.78,695.02) rotate(152.00)" dy="0.25em">CRM</text><text transform="translate(376.79,684.80) rotate(156.00)" dy="0.25em">Cognos</text><text transform="translate(372.53,674.25) rotate(160.00)" dy="0.25em">Custom...</text><text transform="translate(369.01,663.43) rotate(164.00)" dy="0.25em">Data R...</text><text transform="translate(366.26,652.39) rotate(168.00)" dy="0.25em">FMS</text><text transform="translate(364.29,641.19) rotate(172.00)" dy="0.25em">Hyperion</text><text transform="translate(363.10,629.87) rotate(176.00)" dy="0.25em">Insight</text><text transform="translate(362.70,618.50) rotate(180.00)" dy="0.25em">Invoicin...</text><text transform="translate(363.10,607.13) rotate(184.00)" dy="0.25em">Jira</text><text transform="translate(364.29,595.81) rotate(188.00)" dy="0.25em">Law Ac...</text><text transform="translate(366.26,584.61) rotate(192.00)" dy="0.25em">Manag...</text><text transform="translate(369.01,573.57) rotate(196.00)" dy="0.25em">SAM</text><text transform="translate(372.53,562.75) rotate(200.00)" dy="0.25em">SAML</text><text transform="translate(376.79,552.20) rotate(204.00)" dy="0.25em">SAP FI</text><text transform="translate(381.78,541.98) rotate(208.00)" dy="0.25em">Self Ser...</text><text transform="translate(387.47,532.12) rotate(212.00)" dy="0.25em">Service...</text><text transform="translate(393.83,522.69) rotate(216.00)" dy="0.25em">TMS</text><text transform="translate(400.83,513.73) rotate(220.00)" dy="0.25em">Ultimo</text><text transform="translate(408.45,505.27) rotate(224.00)" dy="0.25em">ADFS</text><text transform="translate(416.63,497.37) rotate(228.00)" dy="0.25em">Attorne...</text><text transform="translate(425.35,490.05) rotate(232.00)" dy="0.25em">BYOD</text><text transform="translate(434.55,483.37) rotate(236.00)" dy="0.25em">Decisio...</text><text transform="translate(444.20,477.34) rotate(240.00)" dy="0.25em">Genesys</text><text transform="translate(454.25,472.00) rotate(244.00)" dy="0.25em">Identity ...</text><text transform="translate(464.64,467.37) rotate(248.00)" dy="0.25em">LDAP</text><text transform="translate(475.33,463.48) rotate(252.00)" dy="0.25em">PPM</text><text transform="translate(486.27,460.34) rotate(256.00)" dy="0.25em">Product...</text><text transform="translate(497.40,457.98) rotate(260.00)" dy="0.25em">Remedy</text><text transform="translate(508.66,456.39) rotate(264.00)" dy="0.25em">RentalAX</text><text transform="translate(520.01,455.60) rotate(268.00)" dy="0.25em">SAP F...</text></g>
</svg>
</body></html>
